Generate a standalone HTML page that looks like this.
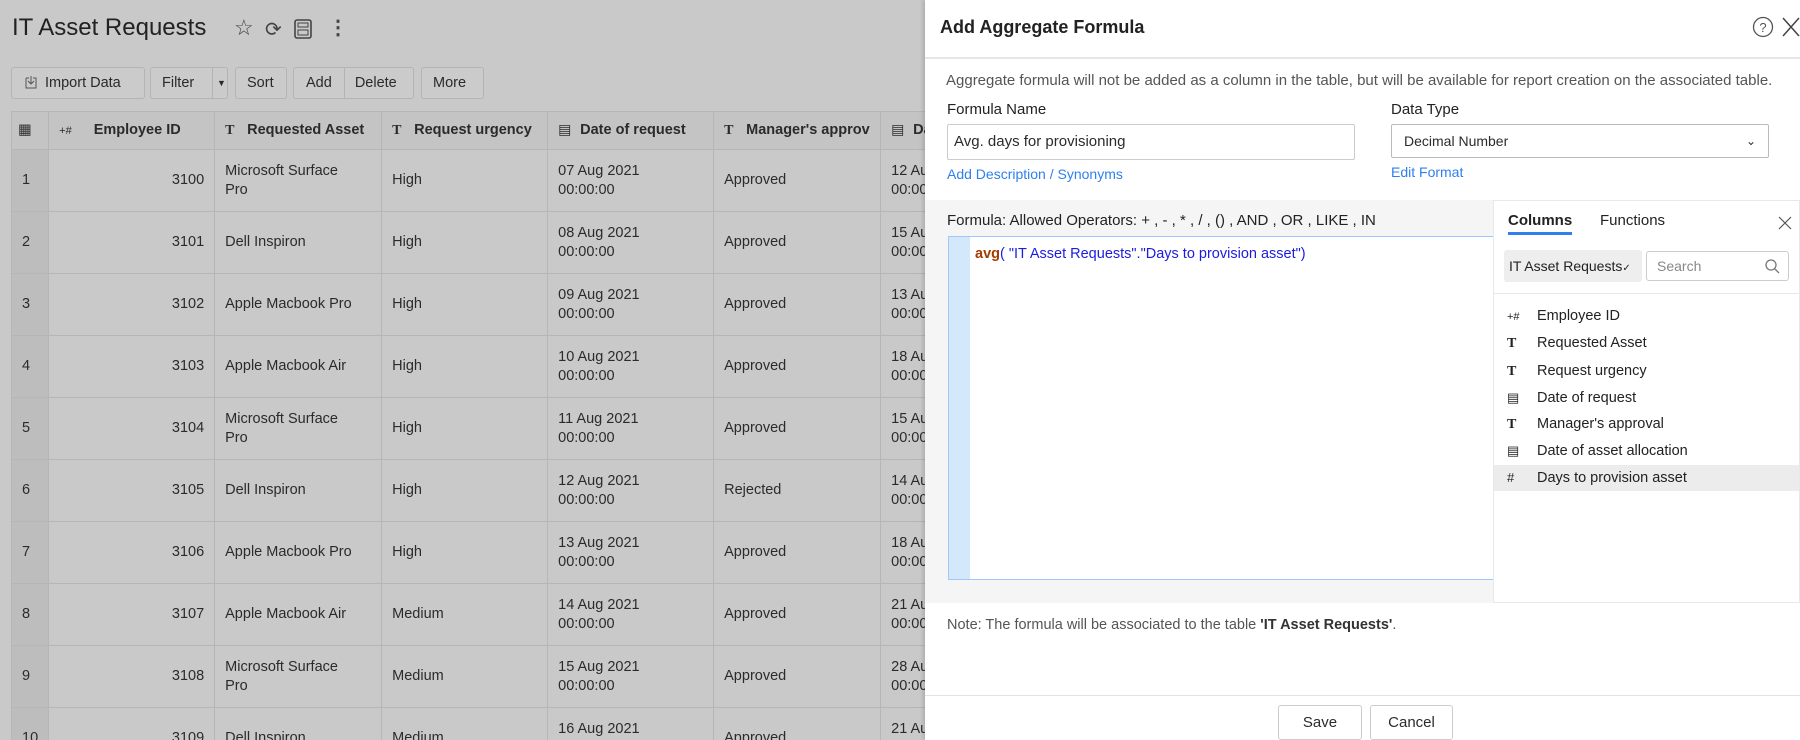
<!DOCTYPE html>
<html style="width:1800px;height:740px;overflow:hidden"><head><meta charset="utf-8"><style>
*{box-sizing:border-box;margin:0;padding:0}
body{width:1800px;height:740px;overflow:hidden;background:#c9c9c9;font-family:"Liberation Sans",sans-serif;color:#2b2b2b;position:relative}
.a{position:absolute}
.btn{position:absolute;top:67px;height:32px;border:1px solid #b4b4b4;border-radius:3px;background:#cbcbcb;font-size:14.5px;line-height:30px;padding:0 11px;color:#2a2a2a}
table{position:absolute;left:11px;top:111px;border-collapse:collapse;font-size:14.5px;table-layout:fixed}
td,th{border:1px solid #b6b6b6;height:62px;vertical-align:middle;padding:0 10px;line-height:19px;overflow:hidden;white-space:nowrap}
th{height:38px;font-weight:bold;text-align:left;background:#c4c4c4}
td.n{background:#bdbdbd}
.p{position:absolute;left:925px;top:0;width:875px;height:740px;background:#fff;box-shadow:-2px 0 4px rgba(0,0,0,.15)}
.ic{font-family:"Liberation Serif",serif;font-weight:bold;font-size:14px;display:inline-block;width:22px}
</style></head><body>
<div class="a" style="left:12px;top:14px;font-size:24px;color:#222">IT Asset Requests</div>
<div class="a" style="left:234px;top:15px;font-size:22px;color:#444">☆</div>
<div class="a" style="left:265px;top:17px;font-size:20px;color:#444">⟳</div>
<svg class="a" style="left:294px;top:19px" width="18" height="20"><rect x="1" y="1" width="16" height="18" rx="2" fill="none" stroke="#444" stroke-width="1.6"/><rect x="4" y="4" width="10" height="4" fill="none" stroke="#444"/><rect x="4" y="11" width="10" height="5" fill="none" stroke="#444"/></svg>
<div class="a" style="left:328px;top:15px;font-size:20px;color:#444;font-weight:bold">⋮</div>
<div class="btn" style="left:11px;width:134px"><svg width="16" height="16" style="vertical-align:-3px;margin-right:6px"><path d="M3 4h3M10 4h3v10H3V4M8 2v8M5 7l3 3 3-3" fill="none" stroke="#555"/></svg>Import Data</div>
<div class="btn" style="left:150px;width:78px">Filter<span style="position:absolute;left:61px;top:0;height:30px;border-left:1px solid #b4b4b4;padding-left:4px;font-size:9px">▼</span></div>
<div class="btn" style="left:235px;width:52px">Sort</div>
<div class="btn" style="left:293px;width:121px;padding:0"><span style="padding:0 12px;border-right:1px solid #b4b4b4;display:inline-block">Add</span><span style="padding:0 10px">Delete</span></div>
<div class="btn" style="left:421px;width:63px">More</div>
<table>
<colgroup><col width="33"><col width="166"><col width="167"><col width="166"><col width="166"><col width="167"><col width="60"></colgroup>
<tr><th style="padding:0 6px;font-weight:normal">▦</th><th><span style="font-weight:normal;font-size:11px;margin-right:22px">+#</span>Employee ID</th><th><span class="ic">T</span>Requested Asset</th><th><span class="ic">T</span>Request urgency</th><th><span class="ic" style="font-weight:normal">▤</span>Date of request</th><th><span class="ic">T</span>Manager's approv</th><th><span class="ic" style="font-weight:normal">▤</span>Da</th></tr>
<tr><td class="n">1</td><td align="right">3100</td><td>Microsoft Surface<br>Pro</td><td>High</td><td>07 Aug 2021<br>00:00:00</td><td>Approved</td><td>12 Au<br>00:00</td></tr>
<tr><td class="n">2</td><td align="right">3101</td><td>Dell Inspiron</td><td>High</td><td>08 Aug 2021<br>00:00:00</td><td>Approved</td><td>15 Au<br>00:00</td></tr>
<tr><td class="n">3</td><td align="right">3102</td><td>Apple Macbook Pro</td><td>High</td><td>09 Aug 2021<br>00:00:00</td><td>Approved</td><td>13 Au<br>00:00</td></tr>
<tr><td class="n">4</td><td align="right">3103</td><td>Apple Macbook Air</td><td>High</td><td>10 Aug 2021<br>00:00:00</td><td>Approved</td><td>18 Au<br>00:00</td></tr>
<tr><td class="n">5</td><td align="right">3104</td><td>Microsoft Surface<br>Pro</td><td>High</td><td>11 Aug 2021<br>00:00:00</td><td>Approved</td><td>15 Au<br>00:00</td></tr>
<tr><td class="n">6</td><td align="right">3105</td><td>Dell Inspiron</td><td>High</td><td>12 Aug 2021<br>00:00:00</td><td>Rejected</td><td>14 Au<br>00:00</td></tr>
<tr><td class="n">7</td><td align="right">3106</td><td>Apple Macbook Pro</td><td>High</td><td>13 Aug 2021<br>00:00:00</td><td>Approved</td><td>18 Au<br>00:00</td></tr>
<tr><td class="n">8</td><td align="right">3107</td><td>Apple Macbook Air</td><td>Medium</td><td>14 Aug 2021<br>00:00:00</td><td>Approved</td><td>21 Au<br>00:00</td></tr>
<tr><td class="n">9</td><td align="right">3108</td><td>Microsoft Surface<br>Pro</td><td>Medium</td><td>15 Aug 2021<br>00:00:00</td><td>Approved</td><td>28 Au<br>00:00</td></tr>
<tr><td class="n">10</td><td align="right">3109</td><td>Dell Inspiron</td><td>Medium</td><td>16 Aug 2021<br>00:00:00</td><td>Approved</td><td>21 Au<br>00:00</td></tr>
</table>

<div class="p">
<div class="a" style="left:15px;top:17px;font-size:18px;font-weight:bold;color:#222">Add Aggregate Formula</div>
<svg class="a" style="left:827px;top:16px" width="22" height="22"><circle cx="11" cy="11" r="9.5" fill="none" stroke="#555" stroke-width="1.3"/><text x="11" y="16" font-size="13" text-anchor="middle" fill="#555" font-family="Liberation Sans">?</text></svg>
<svg class="a" style="left:856px;top:16px" width="20" height="22"><path d="M2 2L18 20M18 2L2 20" stroke="#444" stroke-width="1.5"/></svg>
<div class="a" style="left:0;top:57px;width:875px;border-top:2px solid #e6e6e6"></div>
<div class="a" style="left:21px;top:72px;font-size:15px;color:#555">Aggregate formula will not be added as a column in the table, but will be available for report creation on the associated table.</div>
<div class="a" style="left:22px;top:101px;font-size:15px;color:#222">Formula Name</div>
<div class="a" style="left:22px;top:124px;width:408px;height:36px;border:1px solid #ccc;border-radius:2px;font-size:15px;line-height:34px;padding-left:6px">Avg. days for provisioning</div>
<div class="a" style="left:22px;top:166px;font-size:14px;color:#2f80ed">Add Description / Synonyms</div>
<div class="a" style="left:466px;top:101px;font-size:15px;color:#222">Data Type</div>
<div class="a" style="left:466px;top:124px;width:378px;height:34px;border:1px solid #bbb;border-radius:2px;font-size:14px;line-height:32px;padding-left:12px">Decimal Number<span style="position:absolute;right:12px;top:0;font-size:12px">⌄</span></div>
<div class="a" style="left:466px;top:164px;font-size:14px;color:#2f80ed">Edit Format</div>
<div class="a" style="left:0;top:200px;width:875px;height:403px;background:#f5f5f5"></div>
<div class="a" style="left:22px;top:212px;font-size:15px;color:#222">Formula: Allowed Operators: + , - , * , / , () , AND , OR , LIKE , IN</div>
<div class="a" style="left:23px;top:236px;width:546px;height:344px;background:#fff;border:1px solid #9cc9f5;border-right:none"><div style="position:absolute;left:0;top:0;width:21px;height:100%;background:#d4e8fb"></div>
<div style="position:absolute;left:26px;top:9px;font-size:14.5px;color:#1c1ce0"><span style="color:#a33c00;font-weight:bold">avg</span>( "IT Asset Requests"."Days to provision asset")</div></div>
<div class="a" style="left:568px;top:200px;width:307px;height:403px;background:#fff;border:1px solid #e8e8e8">
<div class="a" style="left:14px;top:11px;font-size:15px;font-weight:bold;color:#222;border-bottom:3px solid #2f80ed;padding-bottom:3px">Columns</div>
<div class="a" style="left:106px;top:11px;font-size:15px;color:#222">Functions</div>
<svg class="a" style="left:284px;top:15px" width="14" height="14"><path d="M1 1L13 13M13 1L1 13" stroke="#555" stroke-width="1.2"/></svg>
<div class="a" style="left:10px;top:49px;width:138px;height:32px;background:#eee;border-radius:3px;font-size:14px;line-height:32px;padding-left:5px;color:#222">IT Asset Requests<span style="font-size:10px">✓</span></div>
<div class="a" style="left:152px;top:50px;width:143px;height:30px;border:1px solid #ccc;border-radius:3px;font-size:14px;line-height:28px;padding-left:10px;color:#888">Search<svg style="position:absolute;right:8px;top:7px" width="15" height="15"><circle cx="6" cy="6" r="5" fill="none" stroke="#777" stroke-width="1.3"/><path d="M10 10l4 4" stroke="#777" stroke-width="1.3"/></svg></div>
<div class="a" style="left:0;top:92px;width:305px;border-top:1px solid #e8e8e8"></div>
<div class="a" style="left:0;top:102px;width:305px;font-size:14.5px;color:#222;line-height:26.3px">
<div style="padding-left:13px"><span style="display:inline-block;width:30px;font-size:11px">+#</span>Employee ID</div>
<div style="padding-left:13px"><span class="ic" style="width:30px">T</span>Requested Asset</div>
<div style="padding-left:13px"><span class="ic" style="width:30px">T</span>Request urgency</div>
<div style="padding-left:13px"><span style="display:inline-block;width:30px;font-size:13px">▤</span>Date of request</div>
<div style="padding-left:13px"><span class="ic" style="width:30px">T</span>Manager's approval</div>
<div style="padding-left:13px"><span style="display:inline-block;width:30px;font-size:13px">▤</span>Date of asset allocation</div>
<div style="padding-left:13px;background:#ececec"><span style="display:inline-block;width:30px;font-size:13px">#</span>Days to provision asset</div>
</div></div>
<div class="a" style="left:22px;top:617px;font-size:14.5px;color:#555">Note: The formula will be associated to the table <b style="color:#333">'IT Asset Requests'</b>.</div>
<div class="a" style="left:0;top:695px;width:875px;border-top:1px solid #e3e3e3"></div>
<div class="a" style="left:353px;top:705px;width:84px;height:35px;border:1px solid #ccc;border-radius:3px;text-align:center;line-height:33px;font-size:15px">Save</div>
<div class="a" style="left:445px;top:705px;width:83px;height:35px;border:1px solid #ccc;border-radius:3px;text-align:center;line-height:33px;font-size:15px">Cancel</div>
</div>
</body></html>
